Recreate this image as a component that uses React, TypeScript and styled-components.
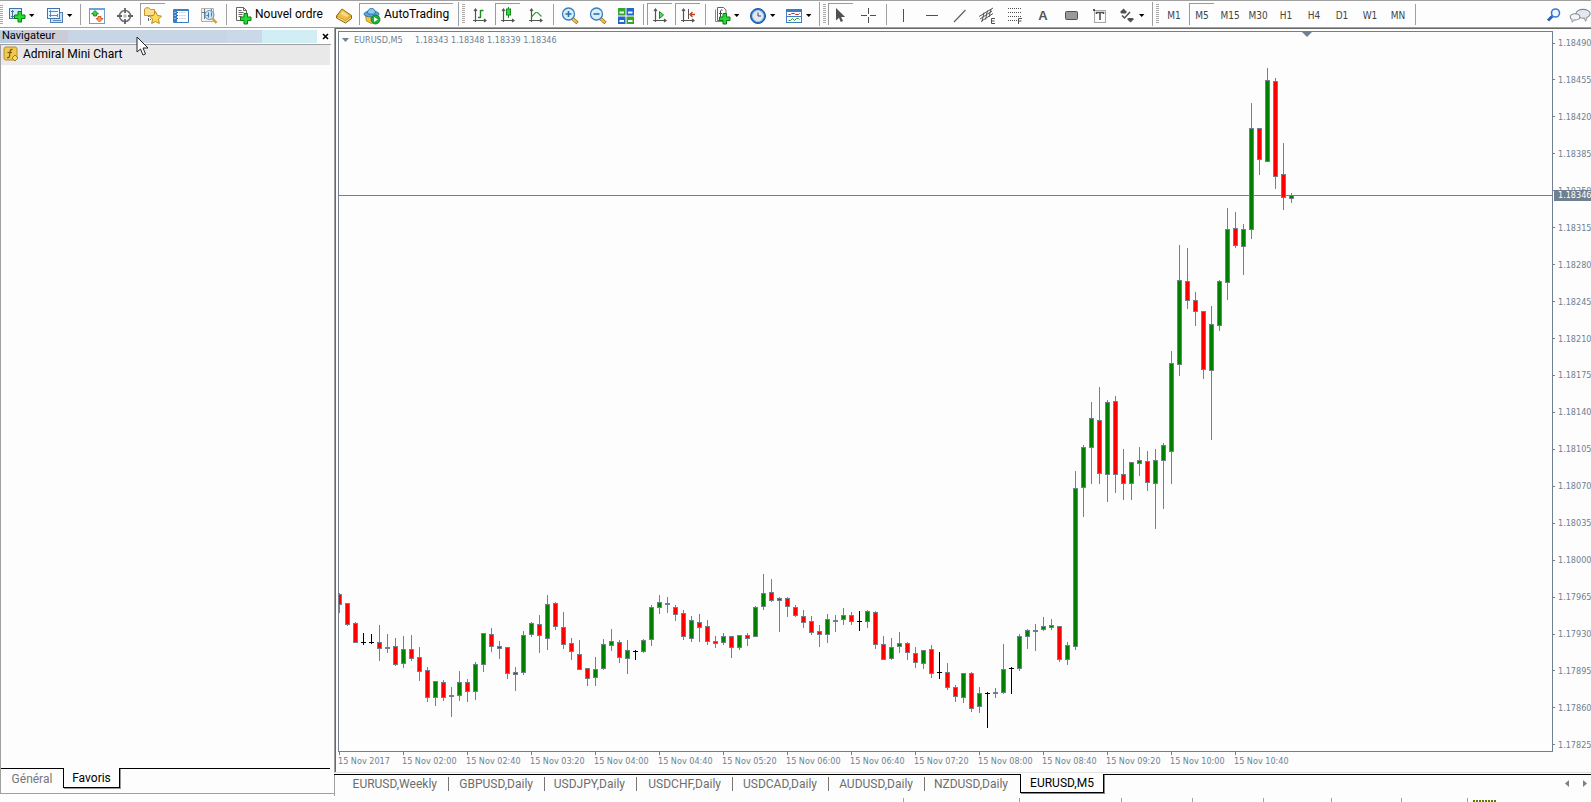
import React from "react";
import styled, { createGlobalStyle, css } from "styled-components";

const uiFont = `Roboto, "Open Sans", sans-serif`;
const chartFont = `"DejaVu Sans Condensed", "DejaVu Sans", sans-serif`;
const slate = "#708090";

const GlobalStyle = createGlobalStyle`
  * { box-sizing: border-box; }
  body { margin: 0; background: #fdfdfd; font-family: ${uiFont}; font-size: 12px; color: #000; }
  button { font: inherit; color: inherit; background: none; border: 0; padding: 0; margin: 0; }
  ul { list-style: none; margin: 0; padding: 0; }
`;

const Terminal = styled.div`
  display: flex;
  flex-direction: column;
  min-height: 100vh;
  overflow: hidden;
`;

/* ---------- toolbar ---------- */

const Toolbar = styled.header`
  display: flex;
  height: 28px;
  border-top: 1px solid #a0a0a0;
  border-bottom: 1px solid #a0a0a0;
  overflow: hidden;
`;

const pressed = css`
  &::before {
    content: "";
    position: absolute;
    inset: 2px 2px 2px 1px;
    border-top: 1px solid #9a9a9a;
    border-left: 1px solid #9a9a9a;
  }
`;

const ToolButton = styled.button<{ $on?: boolean }>`
  position: relative;
  flex: none;
  width: 28px;
  display: flex;
  align-items: center;
  justify-content: center;
  padding-top: 3px;
  ${(p) => p.$on && pressed}
`;

const PeriodButton = styled(ToolButton)`
  font-family: ${chartFont};
  font-size: 10px;
  color: #444;
`;

const MenuButton = styled(ToolButton)`
  width: 36px;
  justify-content: flex-start;
  gap: 3px;
  padding-left: 5px;
`;

const TextButton = styled(ToolButton)<{ $w: number }>`
  width: ${(p) => p.$w}px;
  justify-content: flex-start;
  gap: 3px;
  padding-left: 5px;
  white-space: nowrap;
`;

const Label = styled.span`
  line-height: 16px;
  margin-top: -3px;
`;

const Divider = styled.span`
  flex: none;
  width: 1px;
  margin: 3px 2px 2px 3px;
  background: #a0a0a0;
`;

const GroupEdge = styled.span`
  flex: none;
  width: 8px;
  margin: 1px 0 1px 3px;
  border-left: 1px solid #a0a0a0;
  display: flex;
  padding: 2px 0 2px 3px;
`;

const Grip = styled.span`
  flex: none;
  width: 3px;
  background: repeating-linear-gradient(#a8a8a8 0 1px, transparent 1px 2px);
`;

const LeadGrip = styled(Grip)`
  margin: 4px 0 3px;
`;

const Pair = styled.div`
  display: flex;
  gap: 2px;
`;

const Spacer = styled.span`
  flex: 1;
`;

const ChatButton = styled(ToolButton)`
  width: 23px;
  justify-content: flex-start;
`;

/* ---------- workspace ---------- */

const Workspace = styled.main`
  display: flex;
  flex: 1 0 auto;
`;

const Navigator = styled.aside`
  flex: none;
  width: 334px;
  display: flex;
  flex-direction: column;
  border-bottom: 1px solid #a0a0a0;
  margin-bottom: 3px;
`;

const NavHeader = styled.div`
  display: flex;
  align-items: center;
  height: 17px;
  padding: 2px 1px 1px 0;
  margin-right: 3px;
  border-bottom: 1px solid #a0a0a0;
`;

const NavTitle = styled.h1`
  flex: none;
  width: 317px;
  height: 13px;
  margin: 0;
  padding-left: 2px;
  font-size: 11px;
  font-weight: 400;
  line-height: 12px;
  background: linear-gradient(
    90deg,
    #bccde1 0 18px,
    #ccccd6 18px 68px,
    #c8d5e4 68px 227px,
    #cbd8e8 227px 262px,
    #d1eef4 262px
  );
`;

const CloseButton = styled.button`
  margin-left: auto;
  width: 8px;
  height: 12px;
  display: flex;
  align-items: center;
`;

const NavBody = styled.div`
  flex: 1;
  margin-right: 4px;
  border-left: 1px solid #a0a0a0;
`;

const NavItem = styled.button`
  width: 100%;
  height: 20px;
  display: flex;
  align-items: center;
  gap: 4px;
  padding: 0 0 2px 2px;
  background: #e9e9e9;
`;

const NavTabs = styled.div`
  display: flex;
  margin-right: 4px;
  height: 25px;
  border-left: 1px solid #a0a0a0;
`;

const NavTab = styled.button<{ $active?: boolean; $w: number }>`
  flex: none;
  width: ${(p) => p.$w}px;
  height: 20px;
  line-height: 18px;
  color: ${(p) => (p.$active ? "#000" : "#777")};
  border: 1px solid #000;
  ${(p) =>
    p.$active
      ? css`border-top: 0; box-shadow: 1px 1px 0 #999;`
      : css`border-width: 1px 0 0;`}
`;

const TabLine = styled.span`
  flex: 1;
  border-top: 1px solid #000;
`;

const ChartColumn = styled.section`
  flex: 1;
  min-width: 0;
  display: flex;
  flex-direction: column;
`;

const ChartFrame = styled.div`
  border-left: 1px solid #a0a0a0;
  border-bottom: 1px solid #e3e3e3;
`;

const ChartInner = styled.div`
  border-left: 1px solid #696969;
  border-top: 1px solid #696969;
  padding: 2px 0 0 2px;
  height: 744px;
`;

const ChartRow = styled.div`
  display: flex;
`;

const Plot = styled.div`
  position: relative;
  flex: 1;
  min-width: 0;
  border: 1px solid ${slate};
`;

const PlotSvg = styled.svg`
  display: block;
  width: 100%;
  height: 719px;
`;

const Quote = styled.button`
  position: absolute;
  left: 3px;
  top: 1px;
  display: flex;
  align-items: center;
  gap: 5px;
  font-family: ${chartFont};
  font-size: 9px;
  line-height: 14px;
  color: ${slate};
  white-space: nowrap;
`;

const QuoteSymbol = styled.span`
  min-width: 56px;
  text-align: left;
`;

const PriceScale = styled.div`
  position: relative;
  flex: none;
  width: 38px;
  font-family: ${chartFont};
  font-size: 9px;
  color: ${slate};
  overflow: hidden;
`;

const PriceList = styled.ul`
  display: flex;
  flex-direction: column;
  justify-content: space-between;
  height: 720px;
  padding-top: 6px;
`;

const PriceMark = styled.li`
  display: flex;
  align-items: center;
  gap: 3px;
  height: 12px;
  line-height: 12px;
  &::before {
    content: "";
    flex: none;
    width: 2px;
    height: 1px;
    background: ${slate};
  }
`;

const CurrentPrice = styled.output`
  position: absolute;
  left: 1px;
  right: 0;
  top: 159px;
  height: 11px;
  padding-left: 4px;
  line-height: 11px;
  color: #fff;
  background: ${slate};
`;

const TimeScale = styled.ul`
  display: flex;
  font-family: ${chartFont};
  font-size: 9px;
  color: ${slate};
  overflow: hidden;
`;

const TimeMark = styled.li`
  flex: none;
  width: 64px;
  line-height: 12px;
  white-space: nowrap;
  &::before {
    content: "";
    display: block;
    width: 1px;
    height: 3px;
    margin-left: 1px;
    background: ${slate};
  }
`;

const ChartTabs = styled.nav`
  display: flex;
  margin-top: 1px;
  height: 22px;
  border-left: 1px solid #a0a0a0;
`;

const TabStrip = styled.div`
  display: flex;
  flex: 1;
  min-width: 0;
  margin-left: -1px;
`;

const ChartTab = styled.button<{ $active?: boolean; $w: number }>`
  flex: none;
  width: ${(p) => p.$w}px;
  display: flex;
  align-items: center;
  color: ${(p) => (p.$active ? "#000" : "#6d6d6d")};
  white-space: nowrap;
  ${(p) =>
    p.$active
      ? css`
          justify-content: center;
          height: 19px;
          border: 1px solid #000;
          border-top: 0;
          box-shadow: 1px 1px 0 #888;
          line-height: 18px;
        `
      : css`
          height: 22px;
          border-top: 1px solid #000;
          justify-content: flex-end;
          padding-bottom: 3px;
          line-height: 18px;
          gap: 11px;
        `}
`;

const TabRule = styled.span<{ $hidden?: boolean }>`
  width: 1px;
  height: 14px;
  background: ${(p) => (p.$hidden ? "transparent" : "#777")};
`;

const Arrows = styled.div`
  flex: 1;
  border-top: 1px solid #000;
  display: flex;
  justify-content: flex-end;
  gap: 12px;
  padding: 0 2px 4px 0;
`;

const ArrowButton = styled.button`
  width: 6px;
  display: flex;
  align-items: center;
`;

const StatusBar = styled.footer`
  display: flex;
  justify-content: flex-end;
  height: 4px;
  margin-top: 1px;
`;

const StatusCell = styled.span<{ $w: number }>`
  flex: none;
  width: ${(p) => p.$w}px;
  border-left: 1px solid #a0a0a0;
  padding: 2px 0 0 5px;
`;

const Traffic = styled.span`
  display: block;
  width: 23px;
  height: 2px;
  background: repeating-linear-gradient(90deg, #5d7a00 0 2px, transparent 2px 3px);
`;

const Pointer = styled.svg`
  position: absolute;
  left: 136px;
  top: 36px;
`;

/* ---------- icons ---------- */

const Svg = ({ children, w = 18 }: { children: React.ReactNode; w?: number }) => (
  <svg width={w} height="18" viewBox={`0 0 ${w} 18`} fill="none" aria-hidden="true">
    {children}
  </svg>
);

const Caret = () => (
  <svg width="6" height="4" viewBox="0 0 6 4" aria-hidden="true">
    <path d="M0 0h5.400L2.700 3z" fill="#000" />
  </svg>
);

const Plus = ({ x, y }: { x: number; y: number }) => (
  <path
    transform={`translate(${x} ${y})`}
    d="M4 .5h3.500v3.500h3.500v3.500H7.500v3.500H4V7.500H.5V4H4z"
    fill="#22dd33"
    stroke="#0b7d12"
  />
);

const NewChart = () => (
  <Svg>
    <rect x="1.500" y="1.500" width="12" height="10" fill="#dcebfa" stroke="#3d74b4" />
    <path d="M4.500 3v8M3 9.500h9M3 4.500h3" stroke="#3d74b4" />
    <Plus x={6} y={4} />
  </Svg>
);

const Profiles = () => (
  <Svg>
    <rect x="4.500" y="5.500" width="12" height="10" fill="#cfe0f2" stroke="#4f80b8" />
    <rect x="1.500" y="1.500" width="12" height="10" fill="#eef5fc" stroke="#3d74b4" />
    <path d="M3 4.500h9M4.500 3v7M3 8.500h9M11.500 7v3M7 13.500h8" stroke="#5b8ac2" />
  </Svg>
);

const MarketWatch = () => (
  <Svg>
    <rect x="1.500" y="1.500" width="15" height="15" fill="#fff" stroke="#6a9fd4" />
    <path d="M2 2h14" stroke="#6aa5e0" strokeWidth="2" />
    <path d="M7 3.500l3.500 3.500H8.500v2h-3v-2H3.500z" fill="#3fcf4c" stroke="#127a1c" strokeWidth=".8" />
    <path d="M11.500 15l-3.500-3.500h2v-2h3v2h2z" fill="#ff9a55" stroke="#c04a10" strokeWidth=".8" />
  </Svg>
);

const DataWindow = () => (
  <Svg>
    <circle cx="9" cy="9" r="5.500" stroke="#6f7276" strokeWidth="1.600" />
    <path d="M9 1v5M9 12v5M1 9h5M12 9h5" stroke="#5f6265" strokeWidth="1.800" />
    <path d="M9 7v4M7 9h4" stroke="#aaa" />
  </Svg>
);

const Folder = () => (
  <Svg w={20}>
    <path d="M1.500 8.500V2L3 .8h3L7.500 2.500h4v6z" fill="#ffe08a" stroke="#c4952f" />
    <path d="M5.500 9v6M5 12.500h4" stroke="#666" strokeDasharray="1 1" />
    <path
      d="M12.500 4.500l2 4 4 .6-3 3 .8 4.400-3.800-2.100-3.800 2.100.8-4.400-3-3 4-.6z"
      fill="#ffdb57"
      stroke="#b98a1c"
    />
  </Svg>
);

const TerminalIcon = () => (
  <Svg>
    <rect x="1" y="2" width="16" height="14" rx="1" fill="#3a7cc6" />
    <path d="M5 4h11v11H5z" fill="#fff" />
    <path d="M7 5.500h7M7 8.500h7M7 11.500h7" stroke="#d4dfec" />
    <path d="M2.500 5.500h1M2.500 8.500h1M2.500 11.500h1" stroke="#fff" />
    <path d="M5.500 5v1M5.500 8v1M5.500 11v1" stroke="#a33" />
  </Svg>
);

const Tester = () => (
  <Svg>
    <path d="M1.500 1.500h12v13h-12z" fill="#f3f3ee" stroke="#b0b0a8" />
    <path d="M4.500 2v10M2 5.500h4M11.500 2v3" stroke="#678" />
    <circle cx="9.500" cy="8" r="4.500" fill="#c5def3" fillOpacity=".8" stroke="#5c92c4" />
    <path d="M8.500 5.500v5M11.500 5.500v4M6.500 8.500h2" stroke="#4878a8" />
    <path d="M12.500 11.500l4 4.500" stroke="#d9a13a" strokeWidth="2.600" />
  </Svg>
);

const NewOrder = () => (
  <Svg>
    <path d="M2.500 .5h7l3 3v10h-10z" fill="#fff" stroke="#666" />
    <path d="M9.500 .5v3h3M4.500 3.500h3M4.500 5.500h5M4.500 7.500h4M4.500 9.500h3" stroke="#666" />
    <Plus x={6} y={6} />
  </Svg>
);

const Book = () => (
  <Svg>
    <path d="M7 2L16.500 8.500v3L10.500 16 1.500 11V9z" fill="#d9a02c" stroke="#8f6410" />
    <path d="M7.200 2.500L15.500 8.500 10.500 13 2.500 9z" fill="#eec044" />
    <path d="M7.500 4l6 4.500-1.500 1.500-6.500-3z" fill="#f9dc84" />
    <path d="M2.500 10.500l8 4.200 5.500-4.200" stroke="#fff3c0" strokeWidth=".8" />
  </Svg>
);

const Expert = () => (
  <Svg>
    <path d="M2.500 8h12l-1 6-5 2.500-5-2.500z" fill="#f5c838" stroke="#c08e1c" />
    <ellipse cx="8.500" cy="7" rx="7.500" ry="3" fill="#5aa5dc" stroke="#2f74ae" />
    <path d="M4.500 6c0-6 8-6 8 0 0 1.600-8 1.600-8 0z" fill="#8ccaf0" stroke="#2f74ae" />
    <circle cx="12.500" cy="12.500" r="4.500" fill="#1fae35" stroke="#0e7a1f" strokeWidth=".8" />
    <path d="M11 10l4 2.500-4 2.500z" fill="#fff" />
  </Svg>
);

const Axes = () => (
  <path d="M4.500 2v13M2 13.500h13M3 4l1.500-2L6 4M13 12l2 1.500-2 1.500" stroke="#555" strokeWidth="1.200" />
);
const Bars = () => (
  <Svg><Axes /><path d="M9.500 3v8M9.500 3.500h3M7 10.500h2.500" stroke="#1b8c22" strokeWidth="1.400" /></Svg>
);
const Candles = () => (
  <Svg><Axes /><path d="M9.500 0v11" stroke="#148a1c" /><rect x="7.500" y="2" width="4" height="6" fill="#2bdc3c" stroke="#148a1c" /></Svg>
);
const LineIcon = () => (
  <Svg><Axes /><path d="M4.500 10l4-4.500h2l4 4" stroke="#3a9d42" strokeWidth="1.200" /></Svg>
);
const AutoScroll = () => (
  <Svg><Axes /><path d="M8.500 4.500l4 3.500-4 3.500z" fill="#4de05a" stroke="#148a1c" /></Svg>
);
const Shift = () => (
  <Svg><Axes /><path d="M9.500 2v10" stroke="#555" /><path d="M16 7.500h-4M13.500 5L11 7.500l2.500 2.500" stroke="#c23a10" strokeWidth="1.300" /></Svg>
);

const Magnifier = ({ plus }: { plus?: boolean }) => (
  <Svg>
    <path d="M11 11l5.500 5" stroke="#9b6c12" strokeWidth="3.400" />
    <path d="M11.500 11.500l4.500 4" stroke="#f2c64a" strokeWidth="2" />
    <circle cx="7.500" cy="7" r="6" fill="#d6eefb" stroke="#3a7fba" strokeWidth="1.300" />
    <path d={plus ? "M4.500 7h6M7.500 4v6" : "M4.500 7h6"} stroke="#2c6ea8" strokeWidth="1.600" />
  </Svg>
);

const Tiles = () => (
  <Svg>
    <path d="M1 1h7.500v7.500H1zM9.500 9.500H17V17H9.500z" fill="#3aa52c" />
    <path d="M9.500 1H17v7.500H9.500zM1 9.500h7.500V17H1z" fill="#2566c8" />
    <path d="M2.500 4.500h4.500v2H2.500zM11 4.500h4.500v2H11zM2.500 13H7v2H2.500zM11 13h4.500v2H11z" fill="#f2f7ff" />
  </Svg>
);

const Indicators = () => (
  <Svg>
    <path d="M4.500 .5h6l2.500 2.500v10.500H4.500z" fill="#fff" stroke="#666" />
    <path d="M2.500 2.500v12h8" stroke="#888" />
    <path d="M9.500 3c-1.500-.6-2 .5-2 2v5c0 1-.5 1.500-1.500 1.500M6 6.500h3" stroke="#444" />
    <Plus x={6} y={6} />
  </Svg>
);

const Clock = () => (
  <Svg>
    <circle cx="9" cy="9" r="7.500" fill="#2a76cf" stroke="#1d559b" />
    <circle cx="9" cy="9" r="5.500" fill="#e4eaf0" stroke="#a9cdee" />
    <path d="M9 5.500V9h3" stroke="#444" />
  </Svg>
);

const Template = () => (
  <Svg>
    <rect x="1.500" y="2.500" width="15" height="13" fill="#fff" stroke="#3a7cc6" />
    <path d="M1 3.500h16" stroke="#3a7cc6" strokeWidth="3" />
    <path d="M2 9.500h14" stroke="#3a7cc6" />
    <path d="M3.500 7.500h2l1-1h3l1 1h3l1-1" stroke="#b33" />
    <path d="M3.500 13.500h2l2-2 2 2 2-2h2l1 1" stroke="#2a9a35" />
  </Svg>
);

const Arrow = () => (
  <Svg><path d="M4 1v12.500l3-2.800 1.800 4.300 2.200-1-1.900-4h4z" fill="#505050" /></Svg>
);
const Cross = () => (
  <Svg><path d="M8.500 1v6M8.500 10v6M1 8.500h6M10 8.500h6" stroke="#505050" /></Svg>
);
const VLine = () => (
  <Svg><path d="M9.500 2v13" stroke="#505050" /></Svg>
);
const HLine = () => (
  <Svg><path d="M4 8.500h12" stroke="#505050" /></Svg>
);
const Diagonal = () => (
  <Svg><path d="M4 15L15.500 3" stroke="#606070" strokeWidth="1.200" /></Svg>
);
const Channel = () => (
  <Svg>
    <path d="M1 9.500L15 1M3 14.500L15 6.500M6 5.500l-2 9M9.500 3.500l-2 9M13 2l-2 8M2 12l12-8" stroke="#555" />
    <path d="M17 11.500h-3.500v5H17M13.500 14h3" stroke="#505050" />
  </Svg>
);
const Fibo = () => (
  <Svg>
    <path d="M2 1.500h14M2 5.500h14M2 9.500h14M2 13.500h9" stroke="#505050" strokeDasharray="1 1" />
    <path d="M16 11.500h-3.500V17M12.500 14h3" stroke="#505050" />
  </Svg>
);
const Rect = () => (
  <Svg><rect x="3.500" y="4.500" width="12" height="8" rx="1" fill="#999" stroke="#505050" /></Svg>
);
const Glyph = styled.span`
  font-family: "Liberation Sans", sans-serif;
  font-weight: 700;
  font-size: 13px;
  line-height: 18px;
  color: #555;
`;
const TextLabel = () => (
  <Svg>
    <rect x="4.500" y="3.500" width="11" height="12" stroke="#505050" strokeDasharray="1 1" />
    <path d="M6.500 7V5.500h7V7M10 5.500V13" stroke="#505050" strokeWidth="1.600" />
    <path d="M3 2h2v2H3z" fill="#505050" />
  </Svg>
);
const ArrowsIcon = () => (
  <Svg>
    <path d="M5.500 1.500L9 5 7.500 6.500H3.500L2 5zM12.500 15.500L9 12l1.500-1h4l1.500 1z" fill="#505050" />
    <path d="M4 8.500l2.500 2.500L12 5" stroke="#505050" strokeWidth="1.500" />
  </Svg>
);

const Search = () => (
  <Svg>
    <path d="M7.500 9l-4.500 4.500" stroke="#2a62c0" strokeWidth="3" />
    <circle cx="10.500" cy="6" r="4" fill="#eef6ff" stroke="#3a7ad6" strokeWidth="1.600" />
  </Svg>
);

const Chat = () => (
  <Svg w={26}>
    <ellipse cx="17" cy="6.500" rx="8" ry="5" fill="#e4e9f0" stroke="#84888e" strokeWidth="1.200" />
    <path d="M18 11l2 4 1.500-4.500" fill="#e4e9f0" stroke="#84888e" />
    <ellipse cx="8" cy="10" rx="5.500" ry="3.500" fill="#f3f5f8" stroke="#84888e" strokeWidth="1.200" />
    <path d="M4.500 12.500v3.500l3-2.500" fill="#f3f5f8" stroke="#84888e" />
  </Svg>
);

const Favourite = () => (
  <svg width="16" height="16" viewBox="0 0 16 16" fill="none" aria-hidden="true">
    <rect x="1" y="1" width="13" height="13" rx="2" fill="#f0c850" stroke="#b08d35" />
    <path d="M9.500 3.500C7.500 3 7.200 4.500 7 6.500L6.500 10c-.2 1.500-1 2-2.500 1.500M4.500 6.500h4.500" stroke="#73540c" strokeWidth="1.200" />
    <path d="M12 9l3 3-3 3-3-3z" fill="#ffdb57" stroke="#a67c14" />
  </svg>
);

/* ---------- data ---------- */

type Kind = "R" | "G" | "S" | "K";
type Candle = [number, number, number, number, Kind];

// high, body top, body bottom, low, kind: R down, G up, S flat, K doji
const candles: Candle[] = [
  [593,594,605,613,"R"],[603,603,625,626,"R"],[622,623,643,643,"R"],[633,642,643,645,"K"],[634,642,643,644,"K"],
  [625,642,649,661,"R"],[634,647,649,653,"S"],[638,646,665,666,"R"],[636,649,664,668,"G"],[635,649,659,661,"R"],
  [647,657,672,681,"R"],[667,670,698,702,"R"],[681,681,698,706,"G"],[680,682,698,701,"R"],[687,695,697,717,"S"],
  [671,682,696,701,"G"],[679,682,692,702,"R"],[662,664,692,700,"G"],[633,633,665,672,"G"],[628,634,647,652,"R"],
  [641,646,649,659,"R"],[647,647,674,679,"R"],[667,672,675,691,"G"],[631,635,673,675,"G"],[622,623,635,637,"G"],
  [615,624,636,653,"R"],[595,604,639,650,"G"],[602,603,627,630,"R"],[612,627,645,649,"R"],[638,643,652,660,"R"],
  [640,654,670,670,"R"],[668,668,679,686,"R"],[657,669,678,686,"G"],[639,644,669,670,"G"],[629,641,646,651,"G"],
  [640,642,658,663,"R"],[640,650,659,674,"G"],[650,651,652,660,"K"],[639,640,652,653,"G"],[605,607,640,646,"G"],
  [595,602,608,614,"G"],[597,603,605,613,"S"],[605,607,615,621,"R"],[610,613,637,640,"R"],[616,620,639,642,"G"],
  [614,622,628,642,"R"],[620,626,642,645,"R"],[636,641,644,648,"R"],[633,636,643,645,"G"],[636,636,648,658,"R"],
  [635,635,648,650,"G"],[633,635,639,646,"R"],[606,607,637,637,"G"],[574,593,607,610,"G"],[579,592,601,602,"R"],
  [597,598,601,632,"R"],[597,598,607,617,"R"],[605,607,616,617,"R"],[610,616,623,628,"R"],[616,621,633,635,"R"],
  [625,631,635,647,"R"],[614,619,635,643,"G"],[615,620,622,632,"S"],[608,615,620,625,"G"],[612,615,622,625,"R"],
  [611,621,622,631,"K"],[610,611,622,628,"G"],[611,612,645,649,"R"],[636,644,660,660,"R"],[638,647,659,660,"G"],
  [632,643,647,653,"G"],[642,643,653,660,"R"],[647,653,663,668,"R"],[650,650,664,669,"G"],[645,649,674,678,"R"],
  [652,672,673,679,"K"],[663,672,688,690,"R"],[685,687,697,702,"R"],[673,673,698,703,"G"],[672,673,709,712,"R"],
  [687,693,707,713,"G"],[692,693,694,728,"K"],[688,692,694,698,"S"],[644,669,693,694,"G"],[667,668,669,694,"K"],
  [634,636,669,671,"G"],[629,630,637,649,"G"],[624,630,632,651,"S"],[617,626,630,631,"G"],[619,625,628,630,"G"],
  [626,626,660,662,"R"],[642,645,660,665,"G"],[471,488,647,650,"G"],[445,447,488,517,"G"],[402,418,448,484,"G"],
  [387,420,474,484,"R"],[400,402,475,502,"G"],[396,401,475,493,"R"],[449,474,484,500,"R"],[462,462,484,500,"G"],
  [447,460,464,476,"G"],[451,461,483,491,"R"],[449,460,484,529,"G"],[443,445,461,509,"G"],[351,363,452,484,"G"],
  [245,280,365,376,"G"],[248,281,301,309,"R"],[292,300,312,326,"R"],[311,311,370,379,"R"],[306,324,371,440,"G"],
  [280,281,326,331,"G"],[208,229,283,300,"G"],[212,228,246,248,"R"],[224,229,247,275,"G"],[103,128,230,239,"G"],
  [128,128,160,175,"R"],[68,80,162,162,"G"],[78,81,177,189,"R"],[143,174,198,210,"R"],[193,195,199,203,"G"],
];

const PLOT_TOP = 32;
const STEP = 8;

const fills: Record<Kind, string> = { R: "#ff0000", G: "#008000", S: slate, K: "#000000" };

const prices = Array.from({ length: 20 }, (_, i) => (1.1849 - i * 0.00035).toFixed(5));

const times = [
  "2017", "02:00", "02:40", "03:20", "04:00", "04:40", "05:20", "06:00",
  "06:40", "07:20", "08:00", "08:40", "09:20", "10:00", "10:40",
];

const periods = ["M1", "M5", "M15", "M30", "H1", "H4", "D1", "W1", "MN"];

const symbols: [string, number][] = [
  ["EURUSD,Weekly", 115], ["GBPUSD,Daily", 96], ["USDJPY,Daily", 92], ["USDCHF,Daily", 96],
  ["USDCAD,Daily", 96], ["AUDUSD,Daily", 96], ["NZDUSD,Daily", 95],
];

function CandleMark({ data, index }: { data: Candle; index: number }) {
  const [high, top, bottom, low, kind] = data;
  const x = index * STEP;
  const line = kind === "K" ? "#000" : slate;
  return (
    <g>
      <rect x={x} y={high} width="1" height={low - high} fill={line} />
      <rect x={x - 2} y={top} width="5" height={bottom - top} fill={line} />
      {(kind === "R" || kind === "G") && (
        <rect x={x - 1} y={top + 1} width="3" height={bottom - top - 2} fill={fills[kind]} />
      )}
    </g>
  );
}

function MainToolbar() {
  return (
    <Toolbar>
      <LeadGrip />
      <Pair>
        <MenuButton aria-label="Nouveau graphique"><NewChart /><Caret /></MenuButton>
        <MenuButton aria-label="Profils"><Profiles /><Caret /></MenuButton>
      </Pair>
      <Divider />
      <ToolButton aria-label="Observation du marché"><MarketWatch /></ToolButton>
      <ToolButton aria-label="Fenêtre de données"><DataWindow /></ToolButton>
      <ToolButton aria-label="Navigateur" $on><Folder /></ToolButton>
      <ToolButton aria-label="Terminal"><TerminalIcon /></ToolButton>
      <ToolButton aria-label="Testeur"><Tester /></ToolButton>
      <Divider />
      <TextButton $w={101}><NewOrder /><Label>Nouvel ordre</Label></TextButton>
      <ToolButton aria-label="MetaEditor"><Book /></ToolButton>
      <TextButton $w={97} $on><Expert /><Label>AutoTrading</Label></TextButton>
      <GroupEdge><Grip /></GroupEdge>
      <ToolButton aria-label="Barres"><Bars /></ToolButton>
      <ToolButton aria-label="Chandeliers" $on><Candles /></ToolButton>
      <ToolButton aria-label="Courbe"><LineIcon /></ToolButton>
      <Divider />
      <ToolButton aria-label="Zoom avant"><Magnifier plus /></ToolButton>
      <ToolButton aria-label="Zoom arrière"><Magnifier /></ToolButton>
      <ToolButton aria-label="Mosaïque"><Tiles /></ToolButton>
      <Divider />
      <ToolButton aria-label="Défilement automatique" $on><AutoScroll /></ToolButton>
      <ToolButton aria-label="Décalage du graphique" $on><Shift /></ToolButton>
      <Divider />
      <MenuButton aria-label="Indicateurs"><Indicators /><Caret /></MenuButton>
      <MenuButton aria-label="Périodes"><Clock /><Caret /></MenuButton>
      <MenuButton aria-label="Modèles"><Template /><Caret /></MenuButton>
      <GroupEdge><Grip /></GroupEdge>
      <ToolButton aria-label="Curseur" $on><Arrow /></ToolButton>
      <ToolButton aria-label="Réticule"><Cross /></ToolButton>
      <Divider />
      <ToolButton aria-label="Ligne verticale"><VLine /></ToolButton>
      <ToolButton aria-label="Ligne horizontale"><HLine /></ToolButton>
      <ToolButton aria-label="Ligne de tendance"><Diagonal /></ToolButton>
      <ToolButton aria-label="Canal équidistant"><Channel /></ToolButton>
      <ToolButton aria-label="Retracement de Fibonacci"><Fibo /></ToolButton>
      <ToolButton aria-label="Texte"><Glyph>A</Glyph></ToolButton>
      <ToolButton aria-label="Rectangle"><Rect /></ToolButton>
      <ToolButton aria-label="Étiquette"><TextLabel /></ToolButton>
      <MenuButton aria-label="Flèches"><ArrowsIcon /><Caret /></MenuButton>
      <GroupEdge><Grip /></GroupEdge>
      {periods.map((p) => (
        <PeriodButton key={p} $on={p === "M5"}>{p}</PeriodButton>
      ))}
      <Divider />
      <Spacer />
      <ToolButton aria-label="Rechercher"><Search /></ToolButton>
      <ChatButton aria-label="Messages"><Chat /></ChatButton>
    </Toolbar>
  );
}

export default function App() {
  return (
    <Terminal>
      <GlobalStyle />
      <MainToolbar />
      <Workspace>
        <Navigator>
          <NavHeader>
            <NavTitle>Navigateur</NavTitle>
            <CloseButton aria-label="Fermer">
              <svg width="7" height="7" viewBox="0 0 7 7" aria-hidden="true">
                <path d="M1 1l5 5M6 1L1 6" stroke="#000" strokeWidth="1.600" />
              </svg>
            </CloseButton>
          </NavHeader>
          <NavBody>
            <NavItem><Favourite />Admiral Mini Chart</NavItem>
          </NavBody>
          <NavTabs>
            <NavTab $w={62}>Général</NavTab>
            <NavTab $w={57} $active>Favoris</NavTab>
            <TabLine />
          </NavTabs>
        </Navigator>
        <ChartColumn>
          <ChartFrame>
            <ChartInner>
              <ChartRow>
                <Plot>
                  <PlotSvg role="img" aria-label="EURUSD M5">
                    <g transform={`translate(0 ${-PLOT_TOP})`}>
                      <rect x="0" y="195" width="100%" height="1" fill={slate} />
                      {candles.map((c, i) => (
                        <CandleMark key={i} data={c} index={i} />
                      ))}
                      <path d="M963 32h10l-5 5z" fill={slate} />
                    </g>
                  </PlotSvg>
                  <Quote>
                    <svg width="7" height="4" viewBox="0 0 7 4" aria-hidden="true">
                      <path d="M0 0h7L3.500 4z" fill={slate} />
                    </svg>
                    <QuoteSymbol>EURUSD,M5</QuoteSymbol>
                    <span>1.18343 1.18348 1.18339 1.18346</span>
                  </Quote>
                </Plot>
                <PriceScale>
                  <PriceList>
                    {prices.map((p) => <PriceMark key={p}>{p}</PriceMark>)}
                  </PriceList>
                  <CurrentPrice>1.18346</CurrentPrice>
                </PriceScale>
              </ChartRow>
              <TimeScale>
                {times.map((t) => <TimeMark key={t}>15 Nov {t}</TimeMark>)}
              </TimeScale>
            </ChartInner>
          </ChartFrame>
          <ChartTabs>
            <TabStrip>
              {symbols.map(([name, w], i) => (
                <ChartTab key={name} $w={w}>
                  {name}
                  <TabRule $hidden={i === symbols.length - 1} />
                </ChartTab>
              ))}
              <ChartTab $w={84} $active>EURUSD,M5</ChartTab>
              <Arrows>
                <ArrowButton aria-label="Onglets précédents">
                  <svg width="4" height="7" viewBox="0 0 4 7"><path d="M4 0v7L0 3.500z" fill="#808080" /></svg>
                </ArrowButton>
                <ArrowButton aria-label="Onglets suivants">
                  <svg width="4" height="7" viewBox="0 0 4 7"><path d="M0 0v7l4-3.500z" fill="#808080" /></svg>
                </ArrowButton>
              </Arrows>
            </TabStrip>
          </ChartTabs>
        </ChartColumn>
      </Workspace>
      <StatusBar>
        {[116, 102, 71, 71, 68, 70, 66].map((w, i) => <StatusCell key={i} $w={w} />)}
        <StatusCell $w={124}><Traffic /></StatusCell>
      </StatusBar>
      <Pointer width="13" height="20" viewBox="0 0 13 20" aria-hidden="true">
        <path d="M1 1v15l3.500-3 2.500 6 2.500-1-2.500-6h5z" fill="#fff" stroke="#223" />
      </Pointer>
    </Terminal>
  );
}
